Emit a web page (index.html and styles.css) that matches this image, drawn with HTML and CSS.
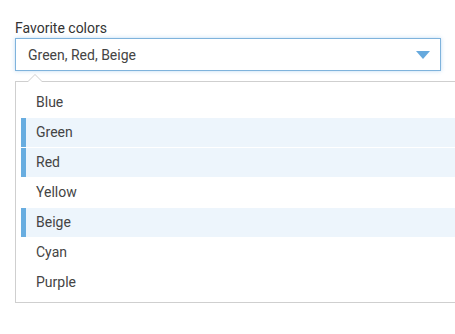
FILE: index.html
```html
<!DOCTYPE html>
<html lang="en">
<head>
  <meta charset="UTF-8">
  <title>Favorite colors</title>
  <link rel="stylesheet" href="styles.css">
</head>
<body>
  <div class="field">
    <label class="field-label">Favorite colors</label>
    <div class="select">
      <span class="select-value">Green, Red, Beige</span>
      <svg class="select-arrow" width="14" height="8" viewBox="0 0 14 8"><path d="M0 0h14L7 8z" fill="#66a9dd"/></svg>
    </div>
    <ul class="options">
      <li>Blue</li>
      <li class="selected">Green</li>
      <li class="selected">Red</li>
      <li>Yellow</li>
      <li class="selected">Beige</li>
      <li>Cyan</li>
      <li>Purple</li>
    </ul>
  </div>
</body>
</html>
```

FILE: styles.css
```css
body {
  margin: 0;
  font-family: Roboto, "Liberation Sans", sans-serif;
  font-size: 14px;
  color: #444;
  background: #fff;
  overflow: hidden;
}
.field {
  padding: 20px 0 0 15px;
}
.field-label {
  display: block;
  color: #333;
  line-height: 16px;
  margin-bottom: 2px;
}
.select {
  height: 31px;
  border: 1px solid #7fb3dc;
  box-shadow: 0 0 4px rgba(110, 175, 230, 0.45);
  display: flex;
  align-items: center;
  justify-content: space-between;
  padding: 0 10px 0 12px;
  width: 402px;
}
.select-value {
  color: #444;
}
.options {
  position: relative;
  list-style: none;
  margin: 10px 0 0;
  padding: 6px 0 4px;
  width: 460px;
  border: 1px solid #cfcfcf;
  border-right: none;
}
.options::before,
.options::after {
  content: "";
  position: absolute;
  left: 11px;
  border: 8px solid transparent;
  border-top: none;
}
.options::before {
  top: -8px;
  border-bottom: 8px solid #cfcfcf;
}
.options::after {
  top: -7px;
  border-bottom: 8px solid #fff;
}
.options li {
  height: 29px;
  line-height: 29px;
  margin: 0 0 1px 5px;
  padding-left: 15px;
}
.options li.selected {
  background: #edf5fc;
  border-left: 5px solid #68ade0;
  padding-left: 10px;
}
```
